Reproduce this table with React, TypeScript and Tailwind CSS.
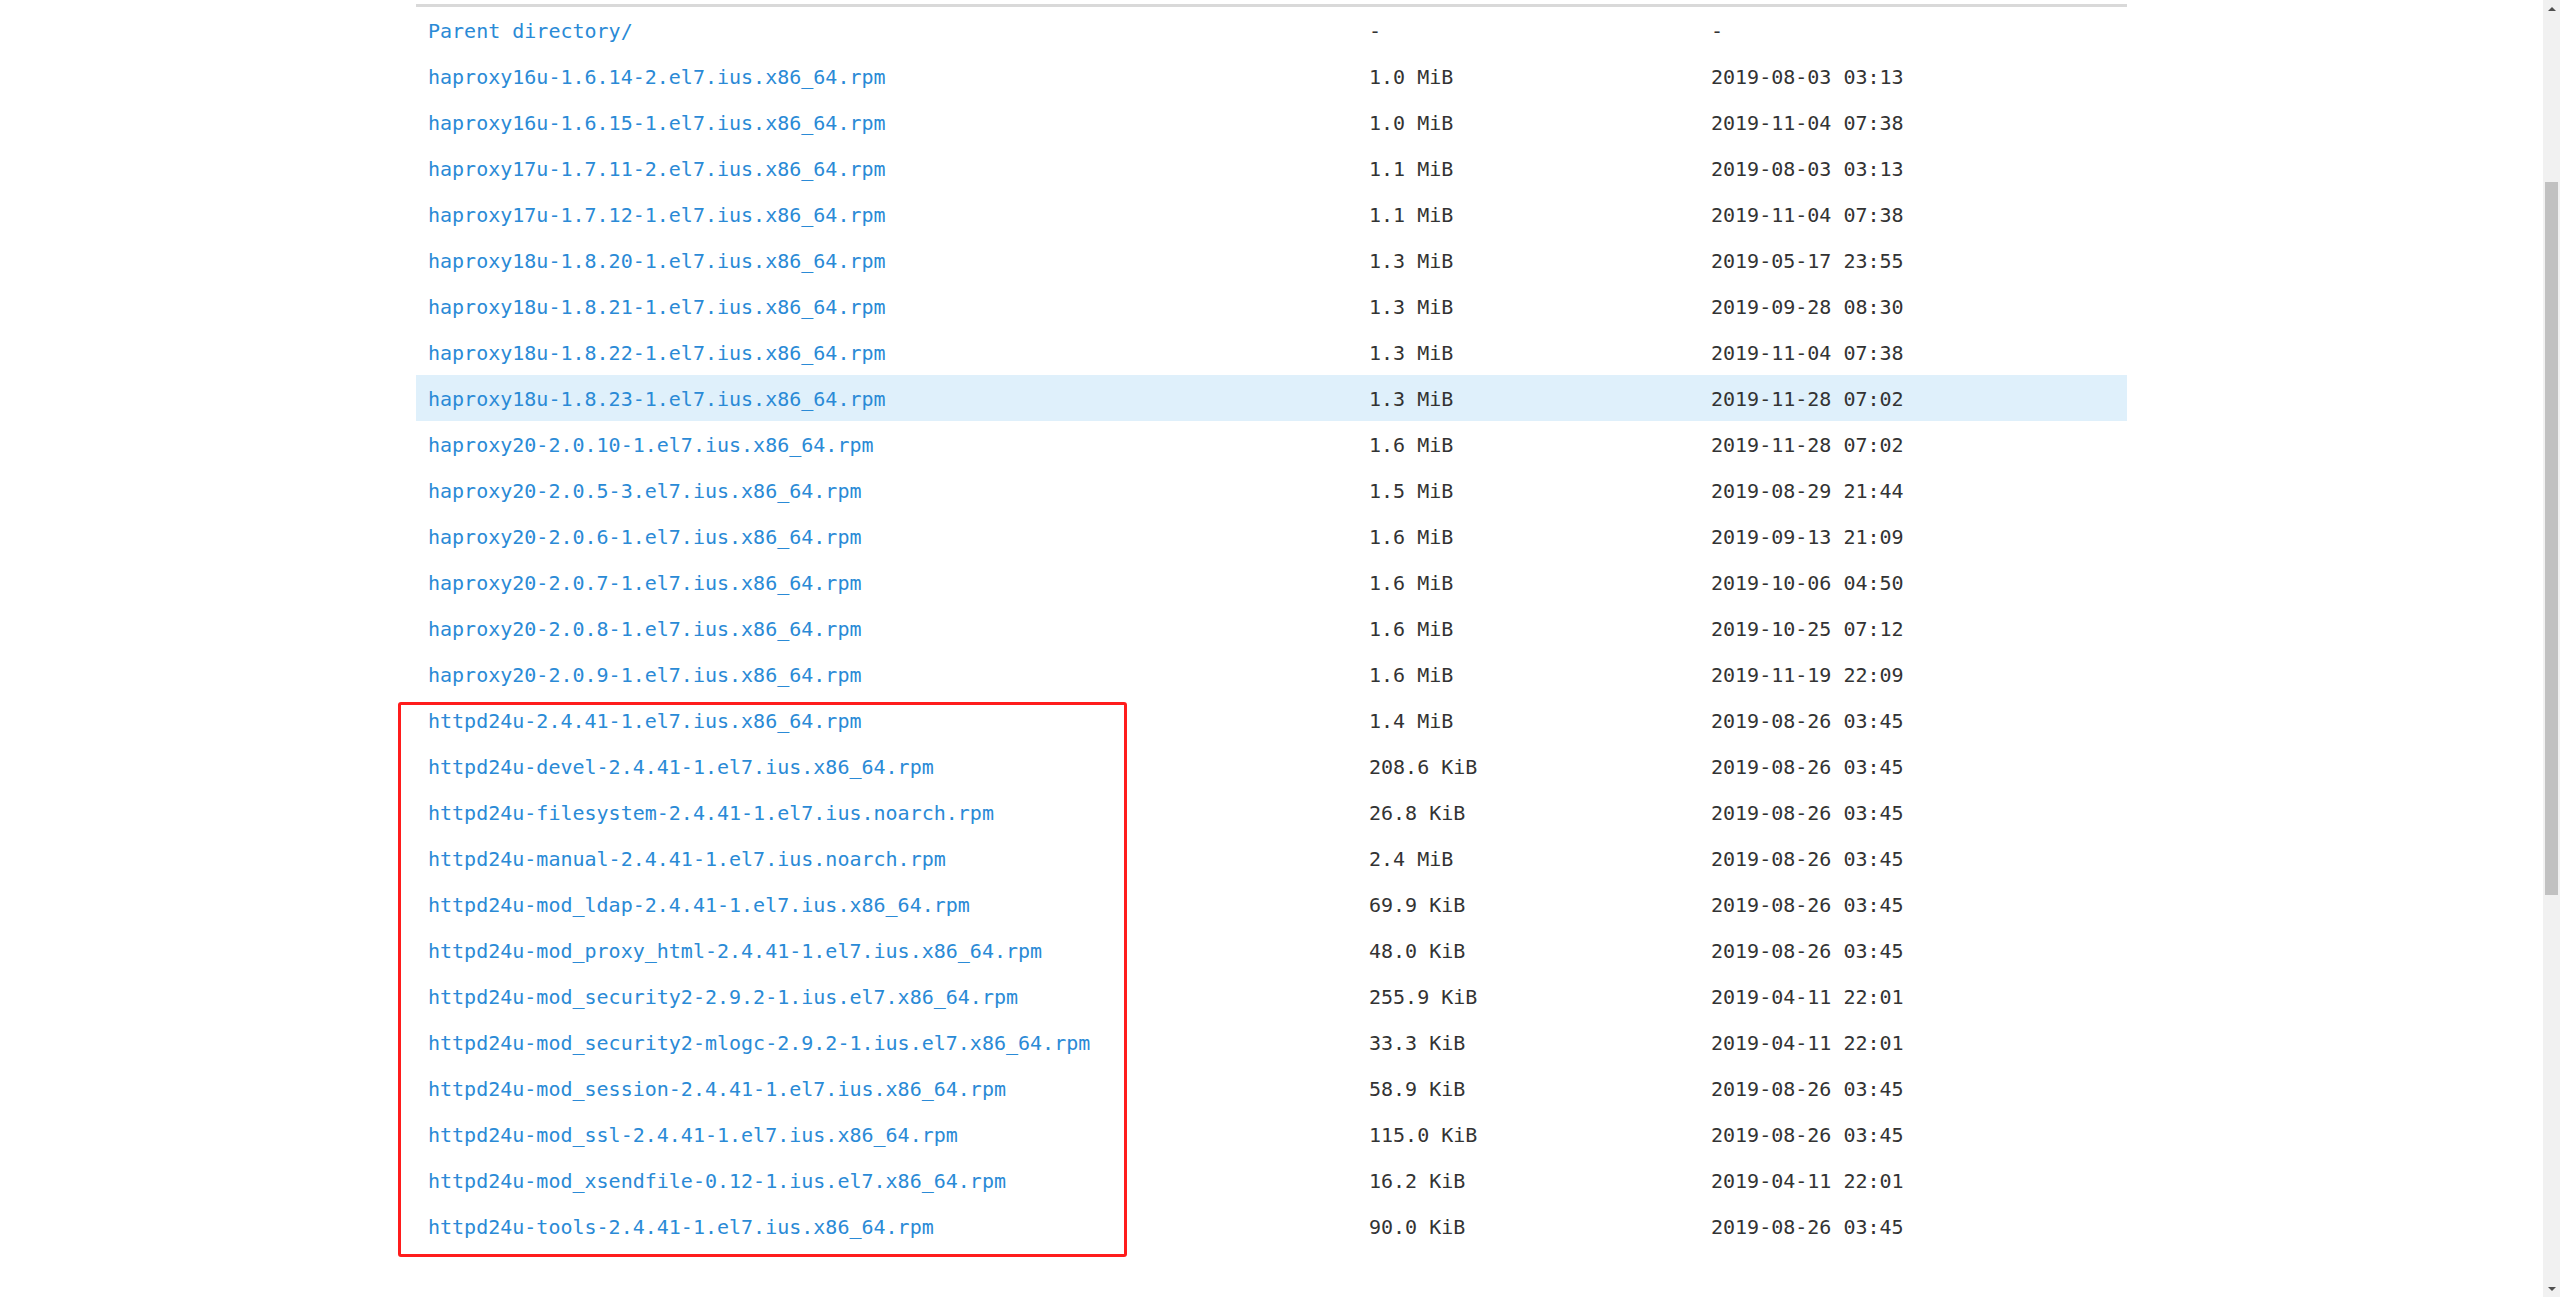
const rows: [string, string, string][] = [
  ["Parent directory/", "-", "-"],
  ["haproxy16u-1.6.14-2.el7.ius.x86_64.rpm", "1.0 MiB", "2019-08-03 03:13"],
  ["haproxy16u-1.6.15-1.el7.ius.x86_64.rpm", "1.0 MiB", "2019-11-04 07:38"],
  ["haproxy17u-1.7.11-2.el7.ius.x86_64.rpm", "1.1 MiB", "2019-08-03 03:13"],
  ["haproxy17u-1.7.12-1.el7.ius.x86_64.rpm", "1.1 MiB", "2019-11-04 07:38"],
  ["haproxy18u-1.8.20-1.el7.ius.x86_64.rpm", "1.3 MiB", "2019-05-17 23:55"],
  ["haproxy18u-1.8.21-1.el7.ius.x86_64.rpm", "1.3 MiB", "2019-09-28 08:30"],
  ["haproxy18u-1.8.22-1.el7.ius.x86_64.rpm", "1.3 MiB", "2019-11-04 07:38"],
  ["haproxy18u-1.8.23-1.el7.ius.x86_64.rpm", "1.3 MiB", "2019-11-28 07:02"],
  ["haproxy20-2.0.10-1.el7.ius.x86_64.rpm", "1.6 MiB", "2019-11-28 07:02"],
  ["haproxy20-2.0.5-3.el7.ius.x86_64.rpm", "1.5 MiB", "2019-08-29 21:44"],
  ["haproxy20-2.0.6-1.el7.ius.x86_64.rpm", "1.6 MiB", "2019-09-13 21:09"],
  ["haproxy20-2.0.7-1.el7.ius.x86_64.rpm", "1.6 MiB", "2019-10-06 04:50"],
  ["haproxy20-2.0.8-1.el7.ius.x86_64.rpm", "1.6 MiB", "2019-10-25 07:12"],
  ["haproxy20-2.0.9-1.el7.ius.x86_64.rpm", "1.6 MiB", "2019-11-19 22:09"],
  ["httpd24u-2.4.41-1.el7.ius.x86_64.rpm", "1.4 MiB", "2019-08-26 03:45"],
  ["httpd24u-devel-2.4.41-1.el7.ius.x86_64.rpm", "208.6 KiB", "2019-08-26 03:45"],
  ["httpd24u-filesystem-2.4.41-1.el7.ius.noarch.rpm", "26.8 KiB", "2019-08-26 03:45"],
  ["httpd24u-manual-2.4.41-1.el7.ius.noarch.rpm", "2.4 MiB", "2019-08-26 03:45"],
  ["httpd24u-mod_ldap-2.4.41-1.el7.ius.x86_64.rpm", "69.9 KiB", "2019-08-26 03:45"],
  ["httpd24u-mod_proxy_html-2.4.41-1.el7.ius.x86_64.rpm", "48.0 KiB", "2019-08-26 03:45"],
  ["httpd24u-mod_security2-2.9.2-1.ius.el7.x86_64.rpm", "255.9 KiB", "2019-04-11 22:01"],
  ["httpd24u-mod_security2-mlogc-2.9.2-1.ius.el7.x86_64.rpm", "33.3 KiB", "2019-04-11 22:01"],
  ["httpd24u-mod_session-2.4.41-1.el7.ius.x86_64.rpm", "58.9 KiB", "2019-08-26 03:45"],
  ["httpd24u-mod_ssl-2.4.41-1.el7.ius.x86_64.rpm", "115.0 KiB", "2019-08-26 03:45"],
  ["httpd24u-mod_xsendfile-0.12-1.ius.el7.x86_64.rpm", "16.2 KiB", "2019-04-11 22:01"],
  ["httpd24u-tools-2.4.41-1.el7.ius.x86_64.rpm", "90.0 KiB", "2019-08-26 03:45"],
];

export default function App() {
  return (
    <div
      className="flex h-screen w-full overflow-hidden bg-white text-[20px]"
      style={{ fontFamily: '"DejaVu Sans Mono", "Liberation Mono", monospace' }}
    >
      <main className="flex-1 overflow-hidden">
        <div className="relative mx-auto w-[1711px] pt-[4px]">
          <div className="border-t-[3px] border-[#d9d9d9]" />
          <table className="w-full table-fixed border-collapse">
            <colgroup>
              <col className="w-[941px]" />
              <col className="w-[342px]" />
              <col />
            </colgroup>
            <tbody>
              {rows.map(([name, size, date], i) => (
                <tr key={name} className={i === 8 ? "bg-[#dff0fb]" : ""}>
                  <td className="px-[12px] pt-[3px] leading-[43px] whitespace-nowrap">
                    <a href="#" className="text-[#2a8ad6]">
                      {name}
                    </a>
                  </td>
                  <td className="px-[12px] pt-[3px] leading-[43px] text-[#333333] whitespace-nowrap">
                    {size}
                  </td>
                  <td className="px-[12px] pt-[3px] leading-[43px] text-[#333333] whitespace-nowrap">
                    {date}
                  </td>
                </tr>
              ))}
            </tbody>
          </table>

          {/* annotation box */}
          <div className="pointer-events-none absolute left-[-18px] top-[702px] h-[555px] w-[729px] rounded-[3px] border-[3px] border-[#ff1c1c]" />
        </div>
      </main>

      <aside className="flex w-[17px] flex-col items-center bg-[#f1f1f1]">
        <div className="flex h-[17px] items-center justify-center">
          <div className="h-0 w-0 border-x-[4px] border-b-[4px] border-x-transparent border-b-[#505050]" />
        </div>
        <div className="mt-[165px] h-[713px] w-[13px] bg-[#c1c1c1]" />
        <div className="flex-1" />
        <div className="flex h-[17px] items-center justify-center">
          <div className="h-0 w-0 border-x-[4px] border-t-[4px] border-x-transparent border-t-[#505050]" />
        </div>
      </aside>
    </div>
  );
}
